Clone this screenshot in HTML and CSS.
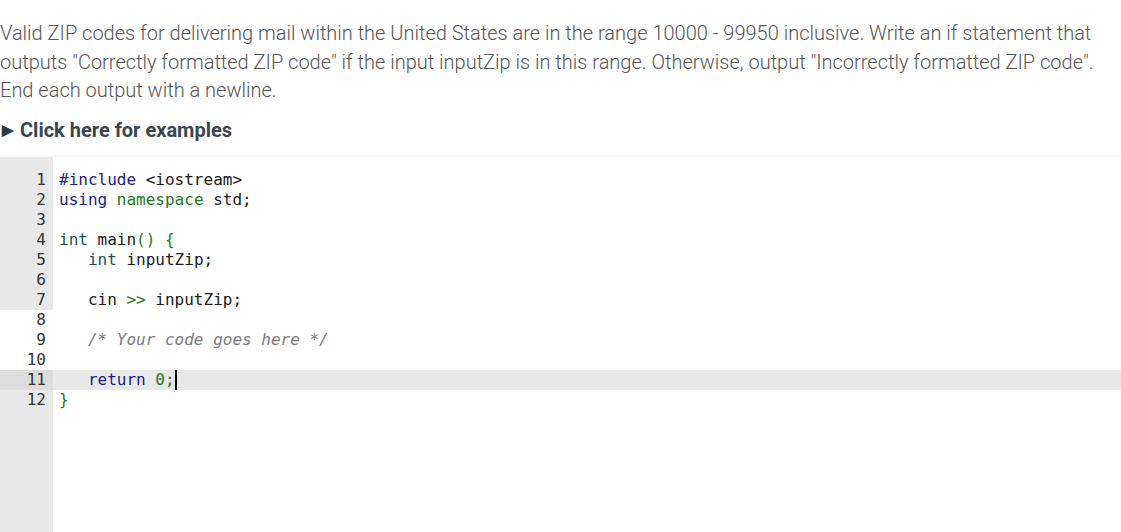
FILE: index.html
```html
<!DOCTYPE html>
<html>
<head>
<meta charset="utf-8">
<link rel="stylesheet" href="styles.css">
</head>
<body>
<div class="prompt">
  <p class="desc">Valid ZIP codes for delivering mail within the United States are in the range 10000 - 99950 inclusive. Write an if statement that outputs "Correctly formatted ZIP code" if the input inputZip is in this range. Otherwise, output "Incorrectly formatted ZIP code". End each output with a newline.</p>
  <div class="examples"><span class="tri">&#9654;</span><span>Click here for examples</span></div>
</div>
<div class="editor">
  <div class="topstrip"></div>
  <div class="code-area">
    <div class="line"><span class="num">1</span><span class="src"><span class="kw">#include</span> <span class="plain">&lt;iostream&gt;</span></span></div>
    <div class="line"><span class="num">2</span><span class="src"><span class="kw">using</span> <span class="ns">namespace</span> std;</span></div>
    <div class="line"><span class="num">3</span><span class="src"></span></div>
    <div class="line"><span class="num">4</span><span class="src"><span class="ty">int</span> main<span class="pn">() {</span></span></div>
    <div class="line"><span class="num">5</span><span class="src">   <span class="ty">int</span> inputZip;</span></div>
    <div class="line"><span class="num">6</span><span class="src"></span></div>
    <div class="line"><span class="num">7</span><span class="src">   cin <span class="pn">&gt;&gt;</span> inputZip;</span></div>
    <div class="line nogutter"><span class="num">8</span><span class="src"></span></div>
    <div class="line nogutter"><span class="num">9</span><span class="src">   <span class="cm">/* Your code goes here */</span></span></div>
    <div class="line nogutter"><span class="num">10</span><span class="src"></span></div>
    <div class="line active"><span class="num">11</span><span class="src">   <span class="kw">return</span> <span class="pn">0;</span><span class="cursor"></span></span></div>
    <div class="line"><span class="num">12</span><span class="src"><span class="pn">}</span></span></div>
    <div class="filler"><span class="num"></span><span class="src"></span></div>
  </div>
</div>
</body>
</html>
```
FILE: styles.css
```css
html, body {
  margin: 0;
  padding: 0;
  background: #ffffff;
  height: 100%;
}
body {
  display: flex;
  flex-direction: column;
  overflow: hidden;
}
.prompt {
  font-family: Roboto, "Noto Sans", sans-serif;
  padding: 19px 0 0 0;
}
.desc {
  margin: 0;
  font-weight: 300;
  font-size: 20px;
  line-height: 28.5px;
  color: #555555;
}
.examples {
  display: flex;
  align-items: center;
  margin-top: 11px;
  height: 28px;
  font-weight: 700;
  font-size: 20px;
  color: #37474f;
}
.tri {
  font-size: 15px;
  margin: 0 6px 0 2px;
  color: #2e3a40;
}
.editor {
  flex: 1;
  display: flex;
  flex-direction: column;
  margin-top: 11px;
}
.topstrip {
  height: 2px;
  background: #f7f7f7;
}
.code-area {
  flex: 1;
  display: flex;
  flex-direction: column;
  font-family: "DejaVu Sans Mono", "Liberation Mono", monospace;
  font-size: 16px;
  color: #1a1a1a;
}
.code-area::before {
  content: "";
  display: block;
  height: 13px;
  width: 53px;
  background: #e8e8e8;
}
.line {
  display: flex;
  height: 20px;
  line-height: 20px;
}
.num {
  width: 46px;
  padding-right: 7px;
  text-align: right;
  background: #e8e8e8;
  color: #333333;
  flex: none;
}
.src {
  padding-left: 6px;
  white-space: pre;
  flex: 1;
}
.nogutter .num {
  background: #ffffff;
}
.active .num {
  background: #dcdcdc;
}
.active .src {
  background: #e8e8e8;
}
.filler {
  flex: 1;
  display: flex;
}
.filler .num { background: #e8e8e8; }
.kw { color: #1c1c8c; }
.ns { color: #237a23; }
.ty { color: #1a5252; }
.pn { color: #237a23; }
.plain { color: #1a1a1a; }
.cm { color: #7a7a7a; font-style: italic; }
.cursor {
  display: inline-block;
  width: 2px;
  height: 20px;
  background: #000;
  vertical-align: top;
}
```
